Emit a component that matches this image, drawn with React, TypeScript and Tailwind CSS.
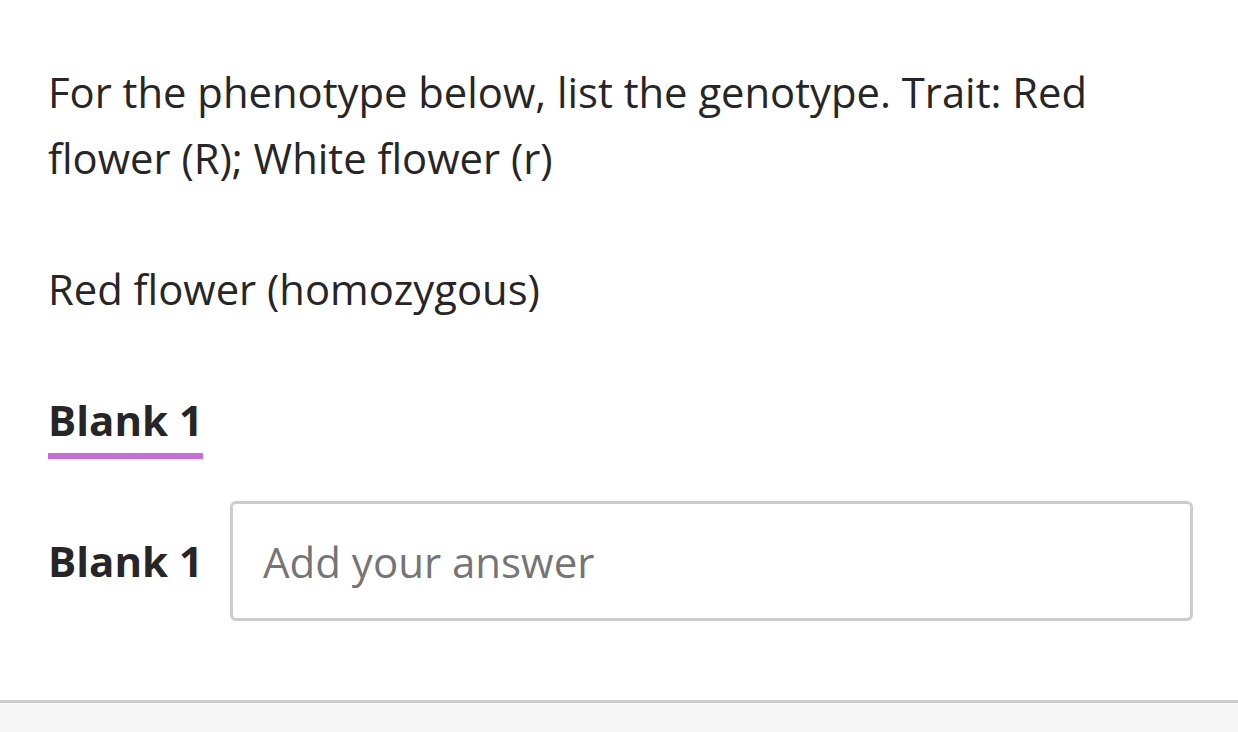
// Fill-in-the-blank question card: prompt text, blank tab, answer input.

const FONT = "font-['Open_Sans',sans-serif]";

export default function App() {
  return (
    <div className={`${FONT} flex min-h-[732px] w-[1238px] flex-col bg-white text-[#262626]`}>
      <div className="flex flex-col pl-12 pr-[45px] pt-[59px]">
        <p className="text-[41.75px] leading-[66px]">
          For the phenotype below, list the genotype. Trait: Red flower (R); White flower (r)
        </p>
        <p className="mt-[65px] text-[41.75px] leading-[66px]">Red flower (homozygous)</p>

        <div className="mt-[70px] flex">
          <div className="flex flex-col">
            <span className="text-[42px] font-bold leading-[56px]">Blank 1</span>
            <span className="mt-[5px] h-[6px] w-[155px] bg-[#c86dd7]" />
          </div>
        </div>

        <div className="mt-[42px] flex items-center gap-[27px]">
          <label className="text-[42px] font-bold leading-[56px]">Blank 1</label>
          <input
            type="text"
            placeholder="Add your answer"
            className="h-[120px] flex-1 rounded-[6px] border-[3px] border-[#cccccc] bg-white px-[30px] text-[42px] text-[#262626] outline-none placeholder:text-[#757575]"
          />
        </div>
      </div>

      <div className="mt-[79px] h-[3px] bg-[#cccccc]" />
      <div className="flex-1 bg-[#f7f7f7]" />
    </div>
  );
}
